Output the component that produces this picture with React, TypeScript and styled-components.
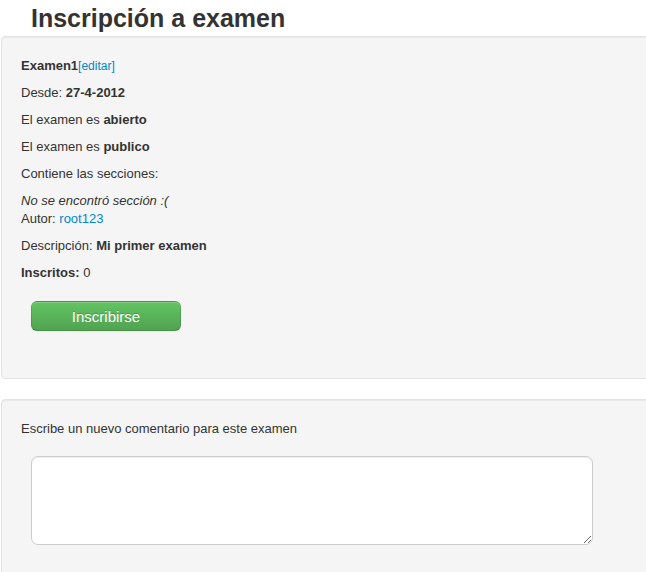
import styled, { createGlobalStyle } from "styled-components";

const GlobalStyle = createGlobalStyle`
  html, body {
    margin: 0;
    padding: 0;
    background: #ffffff;
    overflow: hidden;
  }
  body {
    font-family: "Liberation Sans", Arial, sans-serif;
    font-size: 13px;
    line-height: 18px;
    color: #333333;
  }
`;

export default function App() {
  return (
    <>
      <GlobalStyle />
      <Page>
        <Title>Inscripción a examen</Title>
        <Well>
          <Line>
            <strong>Examen1</strong>
            <Link href="#">[editar]</Link>
          </Line>
          <Line>
            Desde: <strong>27-4-2012</strong>
          </Line>
          <Line>
            El examen es <strong>abierto</strong>
          </Line>
          <Line>
            El examen es <strong>publico</strong>
          </Line>
          <Line>Contiene las secciones:</Line>
          <Line>
            <em>No se encontró sección :(</em>
            <br />
            Autor: <Link href="#" $big>root123</Link>
          </Line>
          <Line>
            Descripción: <strong>Mi primer examen</strong>
          </Line>
          <Line>
            <strong>Inscritos:</strong> 0
          </Line>
          <Form $top={19}>
            <SuccessButton type="button">Inscribirse</SuccessButton>
          </Form>
        </Well>
        <Well>
          <Line>Escribe un nuevo comentario para este examen</Line>
          <Form $top={18}>
            <Comment />
          </Form>
        </Well>
      </Page>
    </>
  );
}

const Page = styled.div`
  width: 720px;
  display: flex;
  flex-direction: column;
`;

const Title = styled.h1`
  margin: 0 0 0 31px;
  font-size: 25px;
  line-height: 36px;
  font-weight: bold;
  color: #333333;
`;

const Well = styled.div`
  margin: 0 0 20px 1px;
  padding: 20px 19px 19px;
  background: #f5f5f5;
  border: 1px solid #e3e3e3;
  border-radius: 4px;
  box-shadow: inset 0 1px 1px rgba(0, 0, 0, 0.05);
`;

const Line = styled.p`
  margin: 0 0 9px;

  strong {
    font-weight: bold;
  }
`;

const Link = styled.a<{ $big?: boolean }>`
  color: #0088cc;
  text-decoration: none;
  font-size: ${(p) => (p.$big ? "13px" : "12px")};
`;

const Form = styled.form<{ $top: number }>`
  display: flex;
  margin: ${(p) => p.$top}px 0 28px 10px;
`;

const SuccessButton = styled.button`
  width: 150px;
  height: 30px;
  padding: 0;
  font-family: "Liberation Sans", Arial, sans-serif;
  font-size: 15px;
  color: #ffffff;
  text-shadow: 0 -1px 0 rgba(0, 0, 0, 0.2);
  background-color: #5bb75b;
  background-image: linear-gradient(to bottom, #62c462, #51a351);
  border: 1px solid rgba(0, 0, 0, 0.1);
  border-bottom-color: rgba(0, 0, 0, 0.25);
  border-radius: 6px;
  box-shadow: inset 0 1px 0 rgba(255, 255, 255, 0.2), 0 1px 2px rgba(0, 0, 0, 0.05);
  cursor: pointer;
`;

const Comment = styled.textarea`
  box-sizing: border-box;
  width: 562px;
  height: 89px;
  background: #ffffff;
  border: 1px solid #cccccc;
  border-radius: 7px;
  box-shadow: inset 0 1px 1px rgba(0, 0, 0, 0.075);
  font-family: "Liberation Sans", Arial, sans-serif;
  font-size: 13px;
`;
